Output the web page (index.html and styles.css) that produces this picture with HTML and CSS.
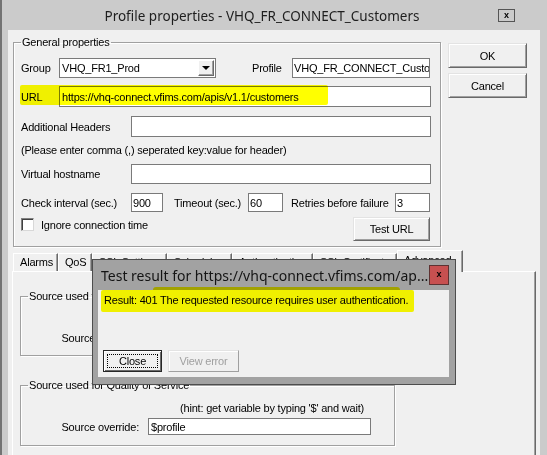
FILE: index.html
```html
<!DOCTYPE html>
<html lang="en">
<head>
    <meta charset="UTF-8">
    <title>Profile properties</title>
    <link rel="stylesheet" href="styles.css">
</head>
<body>

    <div class="window">
        <div class="titlebar">
            <div class="title">Profile properties - VHQ_FR_CONNECT_Customers</div>
            <div class="close-btn">x</div>
        </div>

        <div class="client">
            <div class="top">
                <fieldset class="group general">
                    <legend>General properties</legend>

                    <div class="row row-group">
                        <span class="label w-group">Group</span>
                        <div class="combo">
                            <span class="combo-value">VHQ_FR1_Prod</span>
                            <span class="combo-btn"><span class="arrow"></span></span>
                        </div>
                        <span class="label w-profile">Profile</span>
                        <div class="edit edit-profile">VHQ_FR_CONNECT_Customers</div>
                    </div>

                    <div class="row row-url">
                        <span class="label w-group">URL</span>
                        <div class="edit grow">https://vhq-connect.vfims.com/apis/v1.1/customers</div>
                    </div>

                    <div class="row row-headers">
                        <span class="label w-long">Additional Headers</span>
                        <div class="edit grow"></div>
                    </div>

                    <div class="row row-hint">(Please enter comma (,) seperated key:value for header)</div>

                    <div class="row row-host">
                        <span class="label w-long">Virtual hostname</span>
                        <div class="edit grow"></div>
                    </div>

                    <div class="row row-timing">
                        <span class="label w-long">Check interval (sec.)</span>
                        <div class="edit edit-interval">900</div>
                        <span class="label w-timeout">Timeout (sec.)</span>
                        <div class="edit edit-small">60</div>
                        <span class="label w-retries">Retries before failure</span>
                        <div class="edit edit-small">3</div>
                    </div>

                    <div class="row row-check">
                        <label class="check">
                            <span class="box"></span>
                            <span>Ignore connection time</span>
                        </label>
                        <div class="button btn-test">Test URL</div>
                    </div>
                </fieldset>

                <div class="side-buttons">
                    <div class="button btn-side">OK</div>
                    <div class="button btn-side">Cancel</div>
                </div>
            </div>

            <div class="tabs">
                <div class="tab t-alarms">Alarms</div>
                <div class="tab t-qos">QoS</div>
                <div class="tab t-ssl">SSL Settings</div>
                <div class="tab t-schedule">Schedule</div>
                <div class="tab t-auth">Authentication</div>
                <div class="tab t-cert">SSL Certificate</div>
                <div class="tab t-adv selected">Advanced</div>
            </div>

            <div class="tab-panel">
                <fieldset class="group source first">
                    <legend>Source used for Monitoring</legend>
                    <div class="src-hint">(hint: get variable by typing '$' and wait)</div>
                    <div class="src-row">
                        <span class="label">Source override:</span>
                        <div class="edit edit-source">$profile</div>
                    </div>
                </fieldset>

                <fieldset class="group source">
                    <legend>Source used for Quality of Service</legend>
                    <div class="src-hint">(hint: get variable by typing '$' and wait)</div>
                    <div class="src-row">
                        <span class="label">Source override:</span>
                        <div class="edit edit-source">$profile</div>
                    </div>
                </fieldset>
            </div>
        </div>
    </div>

    <!-- test result popup -->
    <div class="popup">
        <div class="popup-titlebar">
            <div class="popup-title">Test result for https://vhq-connect.vfims.com/ap...</div>
            <div class="popup-close">x</div>
        </div>
        <div class="popup-client">
            <div class="result">Result: 401 The requested resource requires user authentication.</div>
            <div class="popup-buttons">
                <div class="button btn-default"><span class="focus">Close</span></div>
                <div class="button btn-disabled">View error</div>
            </div>
        </div>
    </div>

    <!-- highlighter marks -->
    <div class="marker mark-url"></div>
    <div class="marker mark-result"></div>
    <div class="marker mark-result-top"></div>

</body>
</html>
```

FILE: styles.css
```css
body {
    margin: 0;
    width: 547px;
    height: 455px;
    overflow: hidden;
    position: relative;
    background: #cbcbcb;
    color: #000000;
    font-family: "Liberation Sans", Arial, sans-serif;
    font-size: 11px;
    letter-spacing: -0.2px;
}

.window {
    height: 455px;
    box-sizing: border-box;
    border-left: 2px solid #737373;
    display: flex;
    flex-direction: column;
}

.titlebar {
    height: 30px;
    flex: none;
    display: flex;
    align-items: center;
    padding-left: 24px;
}

.title {
    flex: 1;
    text-align: center;
    font-family: "Noto Sans", "Open Sans", sans-serif;
    font-size: 13.5px;
    letter-spacing: 0;
    color: #1e1e1e;
    padding-top: 1px;
}

.close-btn {
    width: 15px;
    height: 11px;
    border: 1px solid #555555;
    margin-right: 32px;
    font-size: 9px;
    font-weight: bold;
    line-height: 10px;
    text-align: center;
}

.client {
    flex: 1;
    margin: 0 7px 0 6px;
    background: #f0f0f0;
    padding: 6px 0 0 5px;
    display: flex;
    flex-direction: column;
    min-height: 0;
}

/* group boxes */
.group {
    margin: 0;
    box-sizing: border-box;
    border: 1px solid #a0a0a0;
    box-shadow: 1px 1px 0 #ffffff, inset 1px 1px 0 #ffffff;
}

.group legend {
    padding: 0 1px;
    line-height: 13px;
}

.top {
    display: flex;
    align-items: flex-start;
}

.general {
    width: 428px;
    padding: 9px 9px 5px 7px;
}

.row {
    display: flex;
    align-items: center;
}

.label {
    flex: none;
    white-space: nowrap;
}

.w-group { width: 38px; }
.w-long { width: 110px; }
.w-profile { width: 40px; margin-left: 36px; }
.w-timeout { width: 74px; margin-left: 11px; }
.w-retries { width: 104px; margin-left: 8px; }

.edit {
    box-sizing: border-box;
    height: 100%;
    background: #ffffff;
    border: 1px solid #7a7a7a;
    padding: 0 2px;
    display: flex;
    align-items: center;
    white-space: nowrap;
    overflow: hidden;
}

.grow { flex: 1; }
.edit-profile { width: 138px; padding-left: 1px; }
.edit-interval { width: 32px; padding-left: 1px; }
.edit-small { width: 35px; padding-left: 1px; }

.row-group { height: 20px; }
.row-url { height: 21px; margin-top: 8px; }
.row-headers { height: 21px; margin-top: 9px; }
.row-hint { height: 14px; margin-top: 6px; }
.row-host { height: 20px; margin-top: 7px; }
.row-timing { height: 19px; margin-top: 9px; }
.row-check { height: 24px; margin-top: 5px; align-items: flex-start; }

.combo {
    box-sizing: border-box;
    width: 157px;
    height: 20px;
    background: #ffffff;
    border: 1px solid #7a7a7a;
    display: flex;
    align-items: center;
    padding: 1px 1px 1px 2px;
}

.combo-value {
    flex: 1;
}

.combo-btn {
    box-sizing: border-box;
    width: 16px;
    height: 16px;
    background: #f0f0f0;
    border: 1px solid;
    border-color: #ffffff #696969 #696969 #ffffff;
    box-shadow: inset -1px -1px 0 #a0a0a0;
    display: flex;
    align-items: center;
    justify-content: center;
}

.arrow {
    width: 0;
    height: 0;
    border-left: 4px solid transparent;
    border-right: 4px solid transparent;
    border-top: 4px solid #000000;
}

.check {
    display: flex;
    align-items: center;
    gap: 7px;
    margin-top: 1px;
}

.box {
    box-sizing: border-box;
    width: 13px;
    height: 13px;
    background: #ffffff;
    border: 1px solid;
    border-color: #808080 #d8d8d8 #d8d8d8 #808080;
    box-shadow: inset 1px 1px 0 #404040;
}

/* buttons */
.button {
    box-sizing: border-box;
    background: #f0f0f0;
    border: 1px solid;
    border-color: #e3e3e3 #696969 #696969 #e3e3e3;
    box-shadow: inset 1px 1px 0 #ffffff, inset -1px -1px 0 #a0a0a0;
    display: flex;
    align-items: center;
    justify-content: center;
}

.btn-test {
    width: 77px;
    height: 24px;
    margin-left: auto;
    margin-right: 1px;
}

.side-buttons {
    display: flex;
    flex-direction: column;
    gap: 5px;
    margin: 7px 0 0 7px;
}

.btn-side {
    width: 79px;
    height: 25px;
}

/* tabs */
.tabs {
    display: flex;
    align-items: flex-end;
    height: 21px;
    margin-top: 3px;
    flex: none;
}

.tab {
    box-sizing: border-box;
    height: 18px;
    background: #f0f0f0;
    border-top: 1px solid #ffffff;
    border-left: 1px solid #ffffff;
    border-right: 1px solid #696969;
    box-shadow: inset -1px 0 0 #a0a0a0;
    padding: 2px 0 0 6px;
    white-space: nowrap;
    overflow: hidden;
}

.t-alarms { width: 45px; }
.t-qos { width: 34px; }
.t-ssl { width: 75px; }
.t-schedule { width: 65px; }
.t-auth { width: 81px; }
.t-cert { width: 84px; }

.tab.selected {
    width: 66px;
    height: 22px;
    margin-bottom: -1px;
    position: relative;
    padding-top: 3px;
}

.tab-panel {
    flex: 1;
    margin-left: -1px;
    width: 524px;
    box-sizing: border-box;
    border-top: 1px solid #ffffff;
    border-left: 1px solid #ffffff;
    border-right: 1px solid #696969;
    box-shadow: inset -1px 0 0 #a0a0a0;
    padding: 18px 0 0 7px;
}

.source {
    width: 375px;
    padding: 10px 23px 10px 7px;
}

.source.first {
    margin-bottom: 23px;
    padding-bottom: 9px;
}

.src-hint {
    text-align: right;
    line-height: 13px;
    margin-right: 7px;
}

.src-row {
    display: flex;
    justify-content: flex-end;
    align-items: center;
    height: 17px;
    margin-top: 3px;
}

.src-row .label {
    margin-right: 9px;
}

.edit-source {
    width: 223px;
    padding-left: 2px;
}

/* popup */
.popup {
    position: absolute;
    left: 92px;
    top: 259px;
    width: 364px;
    height: 126px;
    box-sizing: border-box;
    border: 1px solid #4d4d4d;
    background: #a2a2a2;
    display: flex;
    flex-direction: column;
}

.popup-titlebar {
    height: 30px;
    flex: none;
    display: flex;
    align-items: center;
    padding-left: 8px;
}

.popup-title {
    flex: 1;
    font-family: "Noto Sans", "Open Sans", sans-serif;
    font-size: 14px;
    letter-spacing: 0;
    color: #141414;
    white-space: nowrap;
    overflow: hidden;
}

.popup-close {
    box-sizing: border-box;
    width: 20px;
    height: 20px;
    margin-right: 6px;
    background: #c75050;
    border: 1px solid #5e3232;
    font-size: 9px;
    font-weight: bold;
    text-align: center;
    line-height: 16px;
}

.popup-client {
    flex: 1;
    margin: 0 6px 7px 5px;
    background: #f0f0f0;
    display: flex;
    flex-direction: column;
    padding: 4px 5px 5px 6px;
}

.result {
    line-height: 13px;
}

.popup-buttons {
    margin-top: auto;
    display: flex;
    gap: 6px;
    margin-left: -1px;
}

.btn-default {
    width: 59px;
    height: 22px;
    border: 1px solid #262626;
    box-shadow: inset 1px 1px 0 #ffffff, inset -1px -1px 0 #696969;
    padding: 3px;
}

.focus {
    flex: 1;
    align-self: stretch;
    border: 1px dotted #000000;
    display: flex;
    align-items: center;
    justify-content: center;
}

.btn-disabled {
    width: 71px;
    height: 22px;
    color: #a0a0a0;
    border-color: #e3e3e3 #a0a0a0 #a0a0a0 #e3e3e3;
    box-shadow: inset 1px 1px 0 #ffffff;
}

/* yellow highlighter */
.marker {
    position: absolute;
    background: #ffff00;
    mix-blend-mode: multiply;
    border-radius: 2px;
}

.mark-url {
    left: 20px;
    top: 85px;
    width: 308px;
    height: 20px;
}

.mark-result {
    left: 101px;
    top: 290px;
    width: 313px;
    height: 22px;
}

.mark-result-top {
    left: 153px;
    top: 287px;
    width: 247px;
    height: 4px;
    border-radius: 3px 3px 0 0;
}
```
